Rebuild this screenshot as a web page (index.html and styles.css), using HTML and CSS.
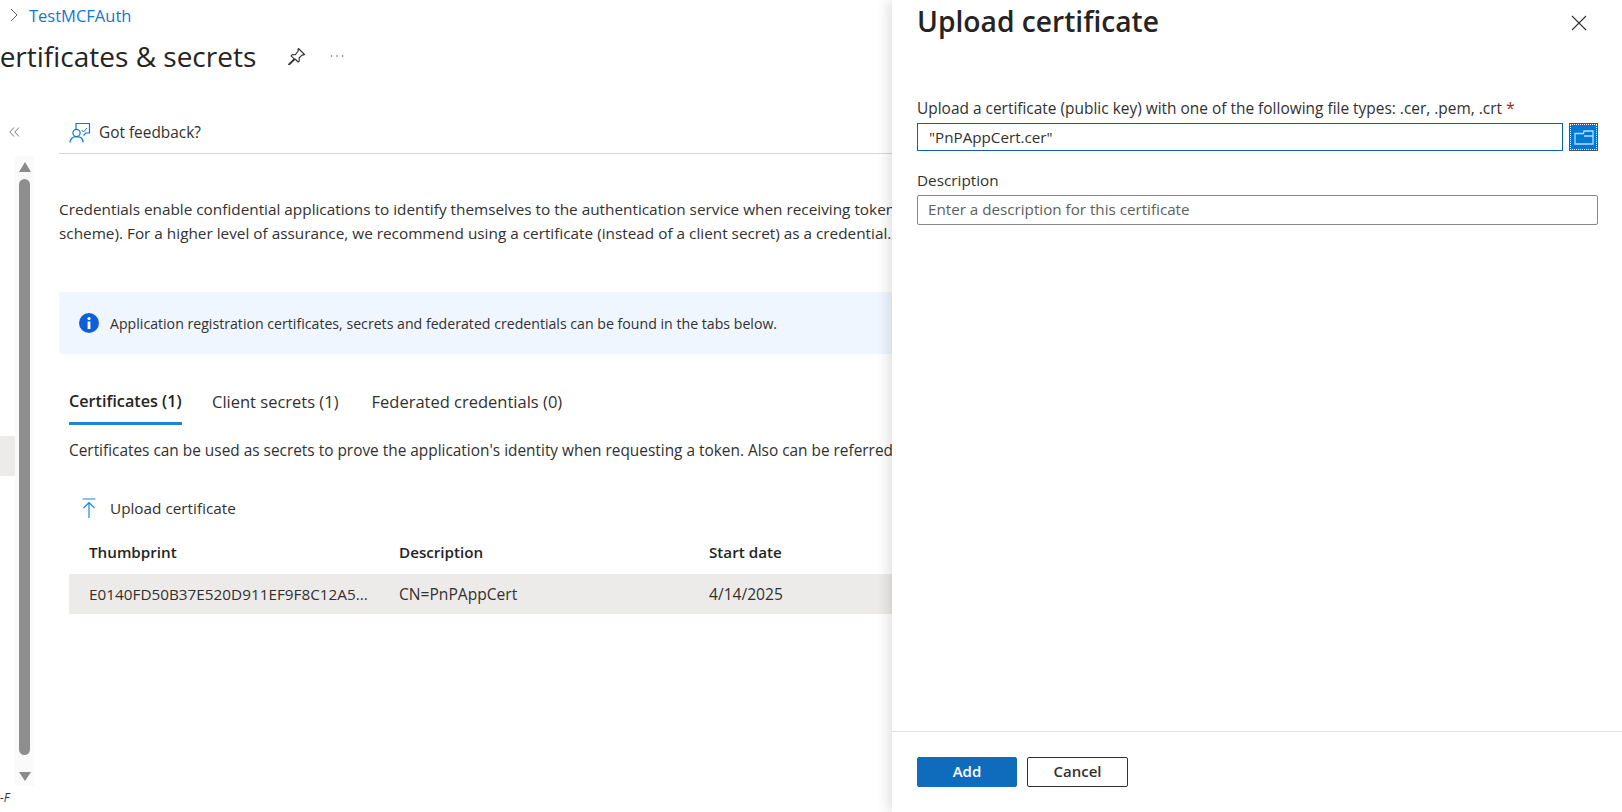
FILE: index.html
```html
<!DOCTYPE html>
<html lang="en">
<head>
<meta charset="utf-8">
<title>Certificates &amp; secrets</title>
<link rel="stylesheet" href="styles.css">
</head>
<body>
<div class="page">
  <header class="head">
    <nav class="crumb">
      <svg class="crumb-chev" width="10" height="14" viewBox="0 0 10 14"><path d="M2 1l6 6-6 6" fill="none" stroke="#605e5c" stroke-width="1"/></svg>
      <a class="crumb-link">TestMCFAuth</a>
    </nav>
    <div class="title-row">
      <h1 class="title">Certificates &amp; secrets</h1>
      <svg class="pin" width="18" height="18" viewBox="0 0 18 18"><path d="M10.500 1.500l6 6-1 .6-1.200-.3-3.200 3.200.2 2.800-1.200 1.200-3-3-5.600 5.500-.9-.1 5.600-5.600-3.100-3 1.200-1.200 2.800.2L10.300 4l-.4-1.300z" fill="none" stroke="#323130" stroke-width="1.100" stroke-linejoin="round"/></svg>
      <svg class="more" width="14" height="4" viewBox="0 0 14 4"><circle cx="1.500" cy="2" r=".8" fill="#605e5c"/><circle cx="7" cy="2" r=".8" fill="#605e5c"/><circle cx="12.500" cy="2" r=".8" fill="#605e5c"/></svg>
    </div>
  </header>
  <div class="body">
    <aside class="rail">
      <svg class="collapse" width="11" height="10" viewBox="0 0 11 10"><path d="M5 .5L.8 5 5 9.500M10 .5L5.800 5 10 9.500" fill="none" stroke="#777" stroke-width="1"/></svg>
      <div class="rail-lower">
        <div class="nav"><div class="nav-sel"></div></div>
        <div class="scroll">
          <span class="arr-up"></span>
          <span class="thumb"></span>
          <span class="arr-down"></span>
        </div>
      </div>
      <div class="cut-text">-F</div>
    </aside>
    <main class="content">
      <div class="cmd">
        <svg class="fb-icon" width="22" height="22" viewBox="0 0 22 22" fill="none" stroke="#0f78d4" stroke-width="1.200"><path d="M7 7V1.500h13.500v9.500h-3.500l-2.500 2.500"/><path d="M12.500 8l2 2 3.500-4" stroke-width="1"/><circle cx="7.500" cy="11" r="3.600"/><path d="M1 20.500c0-3.500 2.500-5.800 6.500-5.800s6.500 2.300 6.500 5.800"/></svg>
        <span class="cmd-text">Got feedback?</span>
      </div>
      <p class="intro">Credentials enable confidential applications to identify themselves to the authentication service when receiving tokens at a web addressable location (using an HTTPS<br>scheme). For a higher level of assurance, we recommend using a certificate (instead of a client secret) as a credential.</p>
      <div class="banner">
        <svg class="info" width="20" height="20" viewBox="0 0 20 20"><circle cx="10" cy="10" r="10" fill="#0f5fd8"/><circle cx="10" cy="5.500" r="1.600" fill="#fff"/><rect x="8.600" y="8.500" width="2.800" height="7.500" fill="#fff"/></svg>
        <span>Application registration certificates, secrets and federated credentials can be found in the tabs below.</span>
      </div>
      <div class="tabs">
        <div class="tab tab-on">Certificates (1)</div>
        <div class="tab">Client secrets (1)</div>
        <div class="tab">Federated credentials (0)</div>
      </div>
      <p class="tab-desc">Certificates can be used as secrets to prove the application's identity when requesting a token. Also can be referred to as public keys.</p>
      <div class="upload">
        <svg width="14" height="21" viewBox="0 0 14 21" fill="none" stroke="#1b86e0" stroke-width="1.200"><path d="M.5 1h13M7 20V4.500M1.500 10L7 4.500 12.500 10"/></svg>
        <span>Upload certificate</span>
      </div>
      <div class="table">
        <div class="tr th"><div>Thumbprint</div><div>Description</div><div>Start date</div></div>
        <div class="tr td"><div>E0140FD50B37E520D911EF9F8C12A5...</div><div class="td-wide">CN=PnPAppCert</div><div class="td-wide">4/14/2025</div></div>
      </div>
    </main>
  </div>
</div>

<section class="panel">
  <div class="panel-head">
    <h2 class="panel-title">Upload certificate</h2>
    <svg class="close" width="16" height="16" viewBox="0 0 16 16"><path d="M1 1l14 14M15 1L1 15" stroke="#323130" stroke-width="1.100"/></svg>
  </div>
  <div class="panel-body">
    <label class="label label-1">Upload a certificate (public key) with one of the following file types: .cer, .pem, .crt <span class="req">*</span></label>
    <div class="file-row">
      <div class="file-input">"PnPAppCert.cer"</div>
      <button class="file-btn">
        <span class="file-btn-in">
          <svg width="20" height="15" viewBox="0 0 20 15" fill="none" stroke="#bcdcf7" stroke-width="1.300"><path d="M1 14V3.500h8.500L10 1h9v13zM10 6h9"/></svg>
        </span>
      </button>
    </div>
    <label class="label label-2">Description</label>
    <div class="text-input">Enter a description for this certificate</div>
  </div>
  <div class="panel-foot">
    <button class="btn btn-primary">Add</button>
    <button class="btn">Cancel</button>
  </div>
</section>
</body>
</html>
```
FILE: styles.css
```css
* { box-sizing: border-box; }
html, body { margin: 0; height: 100%; }
body {
  position: relative;
  overflow: hidden;
  background: #fff;
  color: #323130;
  font-family: "Open Sans", "Noto Sans", sans-serif;
  font-size: 15.300px;
}
.page { width: 892px; height: 812px; overflow: hidden; display: flex; flex-direction: column; }
.head { height: 112px; padding-top: 4px; }
.crumb { display: flex; align-items: center; height: 22px; padding-left: 9px; gap: 10px; }
.crumb-link { color: #0f78d4; font-size: 16.500px; }
.title-row { display: flex; align-items: center; height: 36px; margin-top: 12px; margin-left: -18px; }
.title { margin: 0; font-size: 28px; font-weight: 400; color: #252423; white-space: nowrap; }
.pin { margin-left: 32px; }
.more { margin-left: 24px; }
.body { flex: 1; display: flex; min-height: 0; }
.rail { width: 59px; flex: none; display: flex; flex-direction: column; }
.collapse { margin: 15px 0 0 9px; }
.rail-lower { display: flex; margin-top: 19px; height: 630px; }
.nav { width: 15px; padding-top: 280px; }
.nav-sel { height: 40px; background: #edebe9; }
.scroll { width: 19px; background: #fafafa; display: flex; flex-direction: column; align-items: center; padding-top: 6px; }
.arr-up { width: 0; height: 0; border-left: 6px solid transparent; border-right: 6px solid transparent; border-bottom: 10px solid #8a8a8a; }
.thumb { width: 11px; height: 576px; margin-top: 7px; background: #8e8e8e; border-radius: 6px; }
.arr-down { width: 0; height: 0; margin-top: 17px; border-left: 6px solid transparent; border-right: 6px solid transparent; border-top: 9px solid #8a8a8a; }
.cut-text { margin-top: 5px; font-size: 12px; font-style: italic; color: #323130; line-height: 14px; }
.content { width: 833px; flex: none; overflow: hidden; }
.cmd { display: flex; align-items: center; height: 42px; border-bottom: 1px solid #d6d6d6; padding-left: 10px; gap: 8px; }
.cmd-text { font-size: 15.400px; }
.intro { margin: 43px 0 0; line-height: 24px; white-space: nowrap; font-size: 15.340px; }
.banner { height: 62px; margin-top: 47px; background: #eff6ff; border-radius: 2px; display: flex; align-items: center; padding-left: 20px; gap: 11px; font-size: 14.150px; white-space: nowrap; }
.tabs { display: flex; margin: 31px 0 0 10px; height: 40px; font-size: 16.500px; }
.tab { height: 39px; padding-top: 5px; margin-right: 33px; white-space: nowrap; }
.tab-on { font-weight: 600; font-size: 16.200px; border-bottom: 3px solid #1b86d6; height: 40px; width: 113px; margin-right: 30px; color: #252423; }
.tab-desc { margin: 16px 0 0 10px; white-space: nowrap; line-height: 20px; font-size: 15.400px; }
.upload { display: flex; align-items: center; height: 28px; margin: 33px 0 0 23px; gap: 14px; }
.table { margin-left: 10px; }
.tr { display: grid; grid-template-columns: 310px 310px 1fr; padding-left: 20px; align-items: center; }
.th { height: 52px; padding-top: 7px; font-weight: 600; color: #252423; font-size: 15.200px; }
.td { height: 40px; background: #edebe9; }
.td-wide { font-size: 15.600px; }
.panel {
  position: absolute; top: 0; right: 0; bottom: 0; width: 730px;
  background: #fff;
  box-shadow: -4px 0 12px rgba(0, 0, 0, 0.12);
  display: flex; flex-direction: column;
}
.panel-head { display: flex; justify-content: space-between; align-items: flex-start; padding: 1px 35px 0 25px; height: 96px; }
.panel-title { margin: 0; font-size: 28.200px; font-weight: 600; color: #252423; line-height: 40px; }
.close { margin-top: 14px; }
.panel-body { flex: 1; padding: 0 24px 0 25px; }
.label { display: block; line-height: 24px; color: #323130; }
.label-1 { font-size: 15.450px; }
.req { color: #a4262c; font-size: 16px; }
.file-row { display: flex; gap: 6px; height: 28px; margin-top: 3px; }
.file-input { flex: 1; border: 1px solid #0f5fa8; padding: 0 11px; line-height: 26px; font-size: 15.200px; }
.file-btn { width: 29px; height: 28px; padding: 0; border: 1px solid #505050; background: #0078d4; }
.file-btn-in { display: flex; width: 100%; height: 100%; align-items: center; justify-content: center; border: 1px dotted #fff; }
.label-2 { margin-top: 17px; }
.text-input { height: 30px; margin-top: 3px; border: 1px solid #8a8886; border-radius: 2px; padding: 0 10px; line-height: 27px; color: #605e5c; font-size: 15.200px; }
.panel-foot { height: 81px; border-top: 1px solid #e1e1e1; padding: 25px 0 0 25px; display: flex; gap: 10px; align-items: flex-start; }
.btn { width: 101px; height: 30px; padding: 0 0 2px; border: 1px solid #323130; border-radius: 2px; background: #fff; color: #323130; font: 600 15px "Open Sans", "Noto Sans", sans-serif; }
.btn-primary { width: 100px; background: #0f6cbd; border-color: #0f6cbd; color: #fff; }
```
